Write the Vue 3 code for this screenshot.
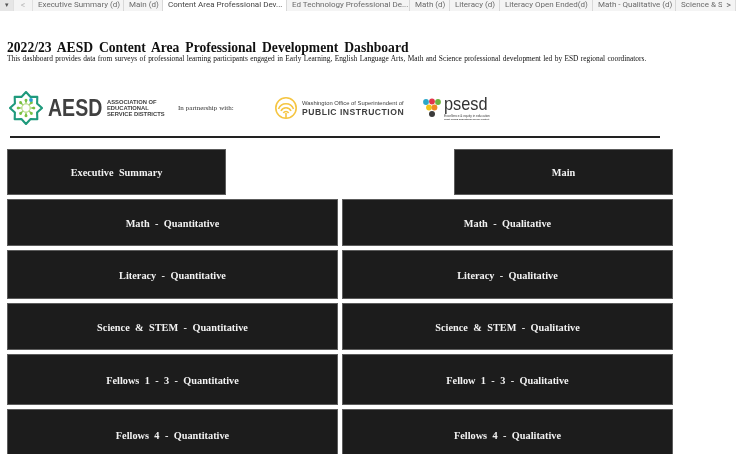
<script setup>
const tabs = [
  { label: 'Executive Summary (d)', w: 91 },
  { label: 'Main (d)', w: 39 },
  { label: 'Content Area Professional Dev...', w: 124, active: true },
  { label: 'Ed Technology Professional De...', w: 123 },
  { label: 'Math (d)', w: 40 },
  { label: 'Literacy (d)', w: 50 },
  { label: 'Literacy Open Ended(d)', w: 93 },
  { label: 'Math - Qualitative (d)', w: 83 },
  { label: 'Science & S', w: 48 }
]
const rows = [
  ['Math - Quantitative', 'Math - Qualitative'],
  ['Literacy - Quantitative', 'Literacy - Qualitative'],
  ['Science & STEM - Quantitative', 'Science & STEM - Qualitative'],
  ['Fellows 1 - 3 - Quantitative', 'Fellow 1 - 3 - Qualitative'],
  ['Fellows 4 - Quantitative', 'Fellows 4 - Qualitative']
]
const petals = [0, 45, 90, 135, 180, 225, 270, 315]
const starPoints = Array.from({ length: 16 }, (_, i) => {
  const r = i % 2 === 0 ? 16 : 12
  const a = (i * Math.PI) / 8 - Math.PI / 2
  return `${(17 + r * Math.cos(a)).toFixed(2)},${(17 + r * Math.sin(a)).toFixed(2)}`
}).join(' ')
</script>

<template>
  <div class="page">
    <nav class="tabs">
      <span class="ctl caret">▾</span>
      <span class="ctl back">&lt;</span>
      <span v-for="t in tabs" :key="t.label" class="tab" :class="{ active: t.active }" :style="{ width: t.w + 'px' }">{{ t.label }}</span>
      <span class="next">&gt;</span>
    </nav>

    <header class="head">
      <h1>2022/23 AESD Content Area Professional Development Dashboard</h1>
      <p>This dashboard provides data from surveys of professional learning participants engaged in Early Learning, English Language Arts, Math and Science professional development led by ESD regional coordinators.</p>
    </header>

    <section class="logos">
      <div class="aesd">
        <svg width="34" height="34" viewBox="0 0 34 34">
          <polygon :points="starPoints" fill="none" stroke="#1f9a7c" stroke-width="2.1" stroke-linejoin="round" />
          <g fill="#7ac143">
            <path v-for="a in petals" :key="a" :transform="`rotate(${a} 17 17)`" d="M17 13 L15.4 9 Q17 6.4 18.6 9 Z" />
          </g>
          <circle cx="17" cy="17" r="4.2" fill="none" stroke="#a5d36a" stroke-width="1" />
          <circle cx="22" cy="9" r="1.9" fill="#2a9fd6" />
        </svg>
        <span class="mark">AESD</span>
        <span class="full">ASSOCIATION OF<br>EDUCATIONAL<br>SERVICE DISTRICTS</span>
      </div>
      <span class="partner">In partnership with:</span>
      <div class="ospi">
        <svg width="22" height="24" viewBox="0 0 22 24">
          <g fill="none" stroke="#f5c542" stroke-width="1.6">
            <circle cx="11" cy="12" r="10.2" />
            <path d="M3.5 13 A8 8 0 0 1 18.5 13" />
            <path d="M6 15 A5.5 5.5 0 0 1 16 15" />
            <path d="M8.4 17 A3 3 0 0 1 13.6 17" />
            <path d="M11 17 V22" />
          </g>
        </svg>
        <div class="ospi-text">
          <span class="small">Washington Office of Superintendent of</span>
          <span class="big">PUBLIC INSTRUCTION</span>
        </div>
      </div>
      <div class="psesd">
        <svg width="21" height="20" viewBox="0 0 21 20">
          <circle cx="4" cy="4" r="2.9" fill="#2aa7c9" />
          <circle cx="10" cy="3.5" r="2.9" fill="#e2354b" />
          <circle cx="16" cy="4" r="2.9" fill="#6cb33f" />
          <circle cx="7" cy="9.5" r="2.9" fill="#f0c419" />
          <circle cx="12.5" cy="9.5" r="2.9" fill="#f08a24" />
          <circle cx="10" cy="16" r="3" fill="#3a3a3a" />
        </svg>
        <div class="psesd-text">
          <span class="word">psesd</span>
          <span class="tiny first">Excellence &amp; equity in education</span>
          <span class="tiny b">Puget Sound Educational Service District</span>
        </div>
      </div>
    </section>

    <div class="rule"></div>

    <section class="buttons">
      <div class="btn exec">Executive Summary</div>
      <div class="btn main">Main</div>
      <template v-for="(r, i) in rows" :key="i">
        <div class="btn low">{{ r[0] }}</div>
        <div class="btn low">{{ r[1] }}</div>
      </template>
    </section>
  </div>
</template>

<style>
html, body { margin: 0; background: #fff; overflow: hidden; }
</style>

<style scoped>
.page {
  width: 736px;
  height: 454px;
  overflow: hidden;
  background: #fff;
  font-family: "Liberation Serif", serif;
  filter: blur(0.3px);
}
.tabs {
  display: flex;
  height: 11px;
  background: #f4f4f4;
  font-family: Roboto, "Noto Sans", sans-serif;
  font-size: 8px;
  color: #6a6a6a;
  line-height: 10px;
  position: relative;
  overflow: hidden;
}
.ctl {
  flex: none;
  box-sizing: border-box;
  text-align: center;
  border-right: 1px solid #e0e0e0;
}
.caret { width: 14px; background: #e6e6e6; color: #555; font-size: 7px; }
.back { width: 19px; color: #bbb; font-size: 9px; }
.tab {
  flex: none;
  box-sizing: border-box;
  padding-left: 5px;
  white-space: nowrap;
  overflow: hidden;
  border-right: 1px solid #d8d8d8;
}
.tab.active { background: #fff; color: #444; }
.next {
  position: absolute;
  right: 0;
  top: 0;
  width: 14px;
  height: 11px;
  background: #f4f4f4;
  text-align: center;
  border-right: 1px solid #dcdcdc;
  box-sizing: border-box;
  font-size: 9px;
}
.head { padding: 30px 0 0 7px; color: #111; }
h1 {
  margin: 0;
  font-size: 13.6px;
  line-height: 14px;
  font-weight: 700;
  word-spacing: 2.55px;
}
p {
  margin: 0;
  font-size: 7.4px;
  line-height: 8px;
  white-space: nowrap;
  word-spacing: 0.55px;
}
.logos {
  height: 38px;
  margin-top: 26px;
  display: flex;
  align-items: center;
  color: #404040;
}
.aesd { display: flex; align-items: center; margin-left: 9px; width: 169px; flex: none; }
.mark {
  display: inline-block;
  width: 57px;
  margin-left: 5px;
  font-family: "Liberation Sans", sans-serif;
  font-weight: 700;
  font-size: 23px;
  transform: scaleX(0.85);
  transform-origin: left center;
}
.full {
  font-family: "Liberation Sans", sans-serif;
  font-size: 5.8px;
  line-height: 6px;
  font-weight: 700;
  margin-left: 2px;
  white-space: nowrap;
}
.partner { font-size: 7px; width: 97px; flex: none; color: #333; word-spacing: 0.2px; }
.ospi { display: flex; align-items: center; gap: 5px; width: 147px; flex: none; }
.ospi-text { display: flex; flex-direction: column; font-family: "Liberation Sans", sans-serif; white-space: nowrap; }
.small { font-size: 5.85px; line-height: 8px; }
.big { font-size: 8.6px; line-height: 10px; font-weight: 700; letter-spacing: 0.5px; }
.psesd { display: flex; align-items: center; gap: 1px; }
.psesd-text { display: flex; flex-direction: column; margin-top: 1px; font-family: "Liberation Sans", sans-serif; white-space: nowrap; }
.word {
  display: inline-block;
  font-size: 19px;
  line-height: 16px;
  color: #333;
  transform: scaleX(0.86);
  transform-origin: left center;
}
.tiny { font-size: 3.2px; line-height: 3.5px; }
.tiny.first { margin-top: 3px; }
.tiny.b { font-size: 2.3px; font-weight: 700; }
.rule {
  height: 2px;
  margin: 9px 0 0 10px;
  width: 650px;
  background: #222;
}
.buttons {
  display: grid;
  grid-template-columns: 331px 331px;
  grid-template-rows: 46px 47px 49px 47px 51px 52px;
  gap: 4px;
  margin: 11px 0 0 7px;
}
.btn {
  box-sizing: border-box;
  display: flex;
  align-items: center;
  justify-content: center;
  background: #1c1c1c;
  border: 1px solid #5c5c5c;
  color: #f2f2f2;
  font-size: 10.3px;
  font-weight: 700;
  word-spacing: 2.8px;
}
.low { padding-top: 1px; }
.exec { width: 219px; justify-self: start; }
.main { width: 219px; justify-self: end; }
</style>
